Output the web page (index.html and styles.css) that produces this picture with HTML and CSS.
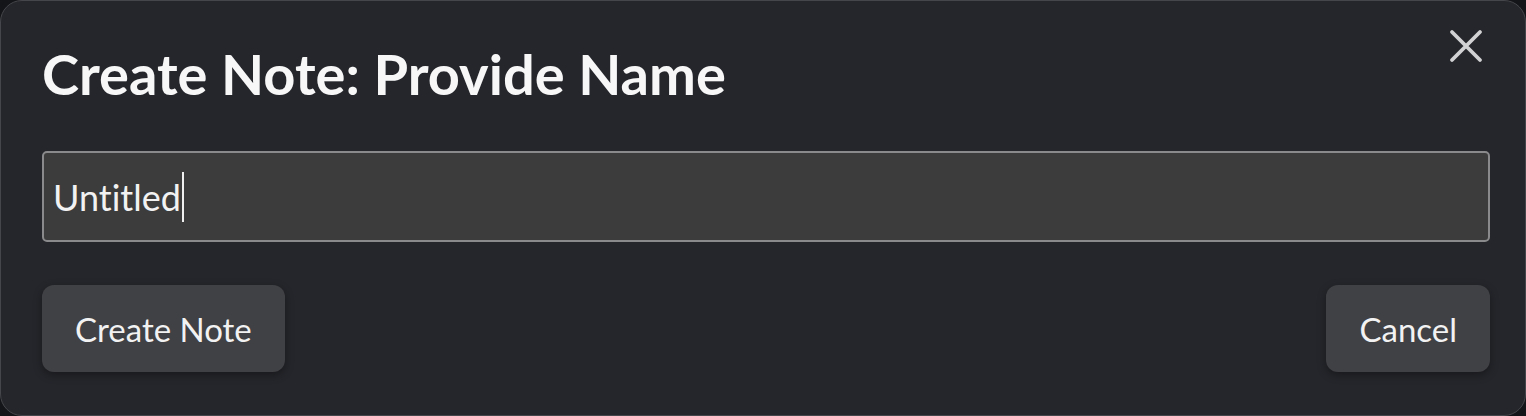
FILE: index.html
```html
<!DOCTYPE html>
<html lang="en">

<head>
    <meta charset="UTF-8">
    <meta name="viewport" content="width=device-width, initial-scale=1.0">
    <title>Create Note</title>
    <link rel="stylesheet" href="styles.css">
</head>

<body>
    <div class="dialog">
        <a href="javascript:;" class="close" title="Close">
            <svg width="34" height="34" viewBox="0 0 34 34">
                <path d="M3 3 L31 31 M31 3 L3 31" stroke="#d2d2d4" stroke-width="3.8" stroke-linecap="round" />
            </svg>
        </a>
        <h1 class="title">Create Note: Provide Name</h1>
        <div class="field">
            <span class="value">Untitled</span><span class="caret"></span>
        </div>
        <div class="actions">
            <button class="btn">Create Note</button>
            <button class="btn">Cancel</button>
        </div>
    </div>
</body>

</html>
```

FILE: styles.css
```css
* {
    padding: 0;
    margin: 0;
    box-sizing: border-box;
}

html,
body {
    height: 100%;
    background: #141518;
}

body {
    font-family: Lato, "Noto Sans", sans-serif;
    font-variant-ligatures: none;
    color: #f4f4f5;
}

.dialog {
    position: relative;
    height: 416px;
    background: #25262b;
    border: 1px solid #45464b;
    border-radius: 22px;
    padding: 38px 35px 0 41px;
    display: flex;
    flex-direction: column;
}

.close {
    position: absolute;
    top: 28px;
    right: 42px;
    width: 34px;
    height: 34px;
    display: block;
}

.title {
    font-size: 56px;
    font-weight: 700;
    line-height: 70px;
    color: #f7f7f8;
}

.field {
    margin-top: 42px;
    height: 91px;
    background: #3c3c3d;
    border: 2px solid #8a8a8c;
    border-radius: 5px;
    padding: 0 9px;
    display: flex;
    align-items: center;
    font-size: 36px;
    color: #f2f2f2;
}

.caret {
    display: inline-block;
    width: 2px;
    height: 50px;
    background: #f0f0f0;
    margin-left: 1px;
}

.actions {
    margin-top: 43px;
    display: flex;
    justify-content: space-between;
}

.btn {
    height: 87px;
    padding: 0 33px;
    background: #404144;
    border: none;
    border-radius: 12px;
    box-shadow: 0 3px 8px rgba(0, 0, 0, 0.35);
    font-family: inherit;
    font-variant-ligatures: none;
    font-size: 33px;
    color: #f2f2f3;
    cursor: pointer;
}
```
